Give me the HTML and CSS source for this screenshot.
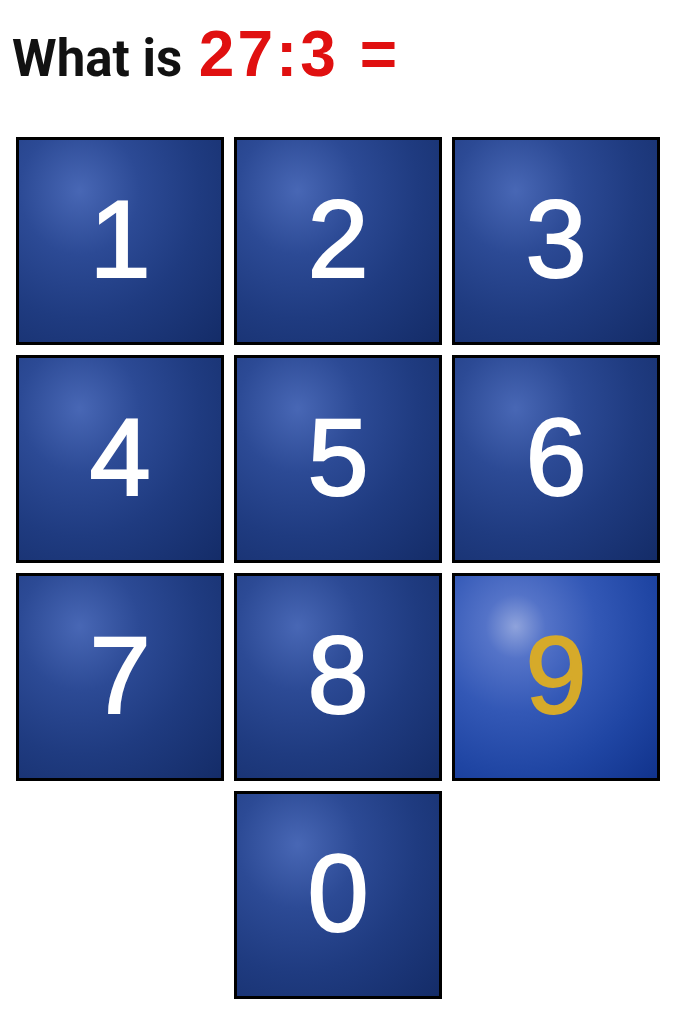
FILE: index.html
```html
<!DOCTYPE html>
<html lang="en">
<head>
    <meta charset="UTF-8">
    <meta name="viewport" content="width=device-width, initial-scale=1.0">
    <title>Quiz</title>
    <link rel="stylesheet" href="styles.css">
</head>
<body>
    <h1 class="question">What is <span class="task">27:3 =</span></h1>
    <div class="pad">
        <button type="button" class="key">1</button>
        <button type="button" class="key">2</button>
        <button type="button" class="key">3</button>
        <button type="button" class="key">4</button>
        <button type="button" class="key">5</button>
        <button type="button" class="key">6</button>
        <button type="button" class="key">7</button>
        <button type="button" class="key">8</button>
        <button type="button" class="key active">9</button>
        <button type="button" class="key zero">0</button>
    </div>
</body>
</html>
```

FILE: styles.css
```css
body{
    margin: 0;
    background-color: white;
}
.question{
    margin: 0;
    padding: 16px 0 0 12px;
    height: 119px;
    box-sizing: border-box;
    font-family: Roboto, "DejaVu Sans Condensed", sans-serif;
    font-weight: bold;
    font-size: 51px;
    line-height: 1.2;
    color: #111;
}
.task{
    margin-left: 4px;
    font-family: "Liberation Sans", Arial, sans-serif;
    font-weight: bold;
    color: #e01010;
    font-size: 64px;
    letter-spacing: 3px;
}
.pad{
    display: grid;
    grid-template-columns: repeat(3, 208px);
    grid-auto-rows: 208px;
    gap: 10px;
    padding: 18px 0 0 16px;
}
.key{
    border: 3px solid black;
    padding: 0 0 4px 0;
    margin: 0;
    background: radial-gradient(ellipse farthest-corner at 30% 25%, #4867b5 0%, #2c4a95 30%, #1f3b80 60%, #142c68 100%);
    color: white;
    font-family: "Liberation Sans", Arial, sans-serif;
    font-size: 110px;
    line-height: 1;
    -webkit-text-stroke: 2px white;
    cursor: pointer;
}
.active{
    background: radial-gradient(ellipse farthest-corner at 30% 25%, #8fa3dc 0%, #5473c8 15%, #3358b6 40%, #1f45a3 70%, #11338c 100%);
    color: #d6aa2a;
    -webkit-text-stroke: 2px #d6aa2a;
}
.zero{
    grid-column: 2;
}
```
